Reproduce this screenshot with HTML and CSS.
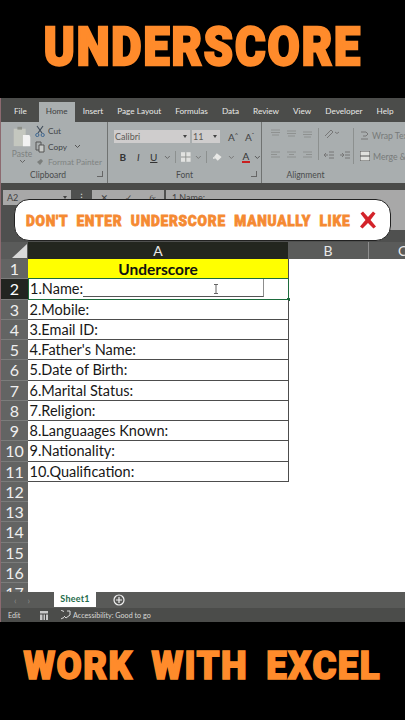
FILE: index.html
```html
<!DOCTYPE html>
<html lang="en">
<head>
<meta charset="utf-8">
<title>Underscore</title>
<link rel="stylesheet" href="styles.css">
</head>
<body>
<div class="page">
  <header class="banner banner-top"><h1 class="title">UNDERSCORE</h1></header>
  <main class="excel">
    <nav class="tabs">
      <span class="tab">File</span><span class="tab active">Home</span><span class="tab">Insert</span><span class="tab">Page Layout</span><span class="tab">Formulas</span><span class="tab">Data</span><span class="tab">Review</span><span class="tab">View</span><span class="tab">Developer</span><span class="tab">Help</span>
    </nav>
    <section class="ribbon">
      <div class="group g-clip">
        <div class="group-body clip-body">
          <div class="paste">
            <svg width="20" height="23" viewBox="0 0 20 25"><path d="M1 4h13v19H1z" fill="#c4c7bf"/><path d="M5 2h5v3H5z" fill="#8d9089"/><path d="M11 11h7l1 2v10h-8z" fill="#f2f2f2"/></svg>
            <span class="paste-label">Paste</span>
            <svg class="chev" width="7" height="5" viewBox="0 0 7 5"><path d="M1 1l2.500 2.500L6 1" fill="none" stroke="#666" stroke-width="1"/></svg>
          </div>
          <div class="clip-list">
            <div class="clip-row">
              <svg width="10" height="12" viewBox="0 0 10 12"><path d="M2 1l5 7M8 1L3 8" stroke="#3e4a58" stroke-width="1.100" fill="none"/><circle cx="2.300" cy="10" r="1.600" fill="none" stroke="#3f6791"/><circle cx="7.700" cy="10" r="1.600" fill="none" stroke="#3f6791"/></svg>
              <span>Cut</span>
            </div>
            <div class="clip-row">
              <svg width="10" height="12" viewBox="0 0 10 12"><path d="M1 1h5v8H1z" fill="none" stroke="#555" stroke-width="1"/><path d="M4 4h5v7H4z" fill="#c9cbc8" stroke="#555" stroke-width="1"/></svg>
              <span>Copy</span>
              <svg class="chev-copy" width="7" height="5" viewBox="0 0 7 5"><path d="M1 1l2.500 2.500L6 1" fill="none" stroke="#555" stroke-width="1"/></svg>
            </div>
            <div class="clip-row muted">
              <svg width="10" height="10" viewBox="0 0 10 10"><path d="M2 5l4-3 2 2-3 4z" fill="#7b7e7c"/></svg>
              <span>Format Painter</span>
            </div>
          </div>
        </div>
        <div class="group-label clip-label">Clipboard<span class="launcher"></span></div>
      </div>
      <div class="group g-font">
        <div class="group-body font-body">
          <div class="font-row">
            <span class="combo combo-font"><span>Calibri</span><i class="caret"></i></span>
            <span class="combo combo-size"><span>11</span><i class="caret"></i></span>
            <span class="grow">A<sup>^</sup></span><span class="grow">A<sup>ˇ</sup></span>
          </div>
          <div class="font-row style-row">
            <b class="style">B</b><i class="style">I</i><u class="style">U</u>
            <svg class="chev" width="7" height="5" viewBox="0 0 7 5"><path d="M1 1l2.500 2.500L6 1" fill="none" stroke="#666"/></svg>
            <span class="sep"></span>
            <svg width="10" height="10" viewBox="0 0 10 10"><path d="M0 0h10v10H0z" fill="#e2e3e1"/><path d="M5 0v10M0 5h10" stroke="#8f9290"/></svg>
            <svg class="chev" width="7" height="5" viewBox="0 0 7 5"><path d="M1 1l2.500 2.500L6 1" fill="none" stroke="#777"/></svg>
            <span class="sep"></span>
            <svg width="12" height="10" viewBox="0 0 12 10"><path d="M5 1l5 4-4 4-4-4z" fill="#e8e8e6"/><circle cx="2" cy="6" r="1" fill="#e8e8e6"/></svg>
            <svg class="chev" width="7" height="5" viewBox="0 0 7 5"><path d="M1 1l2.500 2.500L6 1" fill="none" stroke="#777"/></svg>
            <span class="color-a">A</span>
            <svg class="chev" width="7" height="5" viewBox="0 0 7 5"><path d="M1 1l2.500 2.500L6 1" fill="none" stroke="#555"/></svg>
          </div>
        </div>
        <div class="group-label">Font<span class="launcher"></span></div>
      </div>
      <div class="group g-align">
        <div class="group-body align-body">
          <div class="align-icons">
            <svg width="11" height="9" viewBox="0 0 11 9"><path d="M1 1h9M1 3.500h9M2 6h7" stroke="#8e9190"/></svg>
            <svg width="11" height="9" viewBox="0 0 11 9"><path d="M1 2h9M1 4.500h9M2 7h7" stroke="#8e9190"/></svg>
            <svg width="11" height="9" viewBox="0 0 11 9"><path d="M1 3h9M1 5.500h9M2 8h7" stroke="#8e9190"/></svg>
            <span class="sep"></span>
            <svg class="orient" width="16" height="10" viewBox="0 0 16 10"><path d="M1 8l6-6 2 2-6 6M11 4l2 1.500L15 4" stroke="#777" fill="none"/></svg>
            <svg width="11" height="9" viewBox="0 0 11 9"><path d="M1 1h9M1 3.500h6M1 6h9" stroke="#8e9190"/></svg>
            <svg width="11" height="9" viewBox="0 0 11 9"><path d="M1 1h9M3 3.500h5M1 6h9" stroke="#8e9190"/></svg>
            <svg width="11" height="9" viewBox="0 0 11 9"><path d="M1 1h9M4 3.500h6M1 6h9" stroke="#8e9190"/></svg>
            <svg width="11" height="9" viewBox="0 0 11 9"><path d="M5 1h5M5 4h5M5 7h5M4 4H0M2 2L0 4l2 2" stroke="#777" fill="none"/></svg>
            <svg width="11" height="9" viewBox="0 0 11 9"><path d="M5 1h5M5 4h5M5 7h5M0 4h4M2 2l2 2-2 2" stroke="#777" fill="none"/></svg>
          </div>
          <div class="wrap-col">
            <div class="wrap-row"><svg width="9" height="11" viewBox="0 0 9 11"><path d="M1 2h5l2 2-2 2H3M1 9h7" stroke="#777" fill="none"/></svg><span>Wrap Text</span></div>
            <div class="wrap-row"><svg width="10" height="10" viewBox="0 0 10 10"><path d="M0 0h10v10H0z" fill="#e0e1de" stroke="#555"/><path d="M0 5h10" stroke="#555"/></svg><span>Merge &amp; C</span></div>
          </div>
        </div>
        <div class="group-label align-label">Alignment</div>
      </div>
    </section>
    <div class="ribbon-gap"></div>
    <section class="formula">
      <span class="namebox">A2<i class="caret"></i></span>
      <span class="fx-dots">⋮</span>
      <span class="fx-btns"><span>✕</span><span>✓</span><span class="fx">fx</span></span>
      <span class="fx-input">1.Name:</span>
    </section>
    <section class="sheet">
      <div class="col-head">
        <div class="corner"><span class="tri"></span></div>
        <div class="col col-a">A</div>
        <div class="col col-b">B</div>
        <div class="col col-c">C</div>
      </div>
      <div class="grid">
        <div class="rh">1</div><div class="cell head-cell">Underscore</div>
        <div class="rh rh-active">2</div>
        <div class="cell cell-sel">1.Name:
          <span class="input-line"></span>
          <svg class="ibeam" width="6" height="10" viewBox="0 0 6 10"><path d="M1 .5h4M1 9.500h4M3 .5v9" stroke="#666" fill="none"/></svg>
          <span class="handle"></span>
        </div>
        <div class="rh">3</div><div class="cell">2.Mobile:</div>
        <div class="rh">4</div><div class="cell">3.Email ID:</div>
        <div class="rh">5</div><div class="cell">4.Father's Name:</div>
        <div class="rh">6</div><div class="cell">5.Date of Birth:</div>
        <div class="rh">7</div><div class="cell">6.Marital Status:</div>
        <div class="rh">8</div><div class="cell">7.Religion:</div>
        <div class="rh">9</div><div class="cell">8.Languaages Known:</div>
        <div class="rh">10</div><div class="cell">9.Nationality:</div>
        <div class="rh">11</div><div class="cell">10.Qualification:</div>
        <div class="rh">12</div><div class="blank"></div>
        <div class="rh">13</div><div class="blank"></div>
        <div class="rh">14</div><div class="blank"></div>
        <div class="rh">15</div><div class="blank"></div>
        <div class="rh">16</div><div class="blank"></div>
        <div class="rh">17</div><div class="blank"></div>
      </div>
    </section>
    <div class="sheet-tabs">
      <span class="nav-arrows"><span>‹</span><span>›</span></span>
      <span class="sheet-tab">Sheet1</span>
      <svg class="add" width="12" height="12" viewBox="0 0 12 12"><circle cx="6" cy="6" r="5" fill="none" stroke="#f2f2f2" stroke-width="1.200"/><path d="M6 3v6M3 6h6" stroke="#f2f2f2" stroke-width="1.200"/></svg>
    </div>
    <div class="status">
      <span class="edit">Edit</span>
      <svg class="macro" width="8" height="9" viewBox="0 0 8 9"><path d="M0 0h8v9H0z" fill="#c9c9c9"/><path d="M0 3h8M3 3v6M5.500 3v6" stroke="#444"/></svg>
      <svg class="acc" width="11" height="10" viewBox="0 0 11 10"><path d="M3 1.500a4 4 0 1 0 0 6M6 1h3v4M3 6l2 2 4-3" fill="none" stroke="#ddd" stroke-width="1"/></svg>
      <span>Accessibility: Good to go</span>
    </div>
    <div class="callout">
      <span class="callout-text">DON'T ENTER UNDERSCORE MANUALLY LIKE</span>
      <svg class="cross" width="20" height="20" viewBox="0 0 20 20"><path d="M2.500 3.500L5 1.500l5 5.500 5-5.500 2.500 2L12.500 10l5.500 6.500-2.500 2L10 13l-5.500 5.500-2.500-2L7.500 10z" fill="#d3232a"/></svg>
    </div>
  </main>
  <footer class="banner banner-bottom"><p class="subtitle">WORK WITH EXCEL</p></footer>
</div>
</body>
</html>
```
FILE: styles.css
```css
* { box-sizing: border-box; }
html, body { margin: 0; padding: 0; }
body { background: #000; font-family: "Lato", "Liberation Sans", sans-serif; overflow: hidden; }
.page { width: 405px; height: 720px; display: flex; flex-direction: column; }

.banner { background: #000; display: flex; justify-content: center; flex: none; }
.banner-top { height: 98px; padding-top: 16px; }
.banner-bottom { height: 98px; padding-top: 22px; }
.title, .subtitle {
  margin: 0; color: #ff8b2b; font-family: "Roboto", sans-serif; font-weight: 900;
  white-space: nowrap;
}
.title { font-size: 53px; line-height: 62px; letter-spacing: 2.200px; transform: scaleX(.88); -webkit-text-stroke: 2.500px #ff8b2b; }
.subtitle { font-size: 38px; line-height: 44px; letter-spacing: 1.500px; word-spacing: 8px; transform: scaleX(.96); -webkit-text-stroke: 1.600px #ff8b2b; }

.excel { position: relative; flex: 1; min-height: 0; display: flex; flex-direction: column; background: #fff; border-left: 1px solid #8c6a70; overflow: hidden; }

.tabs { height: 24px; flex: none; background: #4b4c4a; display: flex; align-items: flex-end; padding-left: 6px; color: #e9e9e7; font-size: 8.200px; white-space: nowrap; }
.tab { height: 20px; line-height: 19px; padding: 0 7px; }
.tab:first-child { margin-right: 5px; }
.active { background: #a9aeaf; color: #3e4040; padding: 0 7px; margin-right: 1px; }

.ribbon { height: 61px; flex: none; background: #a9aeaf; display: flex; color: #444; font-size: 9px; }
.group { display: flex; flex-direction: column; border-right: 1px solid #707372; flex: none; }
.g-clip { width: 107px; }
.g-font { width: 154px; }
.g-align { flex: 1; border-right: 0; min-width: 0; overflow: hidden; }
.group-body { flex: 1; display: flex; min-height: 0; }
.group-label { height: 15px; line-height: 14px; text-align: center; position: relative; color: #4a4c4c; font-size: 8.500px; }
.clip-label { padding-right: 12px; }
.launcher { position: absolute; right: 4px; top: 3px; width: 6px; height: 6px; border: 1px solid #666; border-width: 0 1px 1px 0; }

.clip-body { padding: 3px 0 0 10px; gap: 2px; }
.paste { display: flex; flex-direction: column; align-items: center; width: 22px; color: #7d8180; font-size: 8.500px; }
.paste-label { margin-top: 1px; line-height: 10px; }
.clip-list { display: flex; flex-direction: column; gap: 2.500px; font-size: 8.300px; color: #404345; white-space: nowrap; }
.clip-row { display: flex; align-items: center; gap: 3px; height: 13px; }
.muted { color: #7f8382; }
.chev-copy { margin-left: 4px; }

.font-body { flex-direction: column; padding: 8px 0 0 6px; gap: 8px; }
.font-row { display: flex; align-items: center; }
.combo { height: 13px; background: #cfcdcd; display: flex; align-items: center; justify-content: space-between; padding: 0 3px 0 1px; color: #5d5a55; font-size: 9px; }
.combo-font { width: 76px; }
.combo-size { width: 28px; margin-left: 2px; }
.caret { width: 0; height: 0; border: 2px solid transparent; border-top: 3px solid #444; border-bottom: 0; display: block; }
.grow { font-size: 10px; margin-left: 8px; color: #3e4040; width: 9px; }
.grow sup { font-size: 6px; line-height: 0; }
.style-row { gap: 4px; padding-left: 3px; font-size: 10px; color: #333; }
.style-row .style { width: 12px; text-align: center; font-family: "Lato", sans-serif; }
.sep { width: 1px; height: 12px; background: #8c908f; margin: 0 1px; }
.color-a { font-size: 10px; color: #333; border-bottom: 2px solid #c91f1f; line-height: 10px; width: 9px; text-align: center; margin-left: 3px; }

.align-body { padding: 6px 0 0 8px; gap: 4px; }
.align-icons { display: grid; grid-template-columns: 11px 11px 11px 1px 11px 11px; gap: 12px 5px; width: 79px; align-items: center; align-content: start; }
.align-icons .sep { grid-row: 1 / 3; grid-column: 4; height: 32px; margin: 0; }
.orient { grid-column: 5 / 7; grid-row: 1; }
.wrap-col { display: flex; flex-direction: column; gap: 7px; color: #777a79; font-size: 8.700px; white-space: nowrap; border-left: 1px solid #8c908f; padding-left: 6px; height: 36px; }
.wrap-row { display: flex; align-items: center; gap: 3px; height: 14px; }
.align-label { padding-right: 56px; }

.ribbon-gap { height: 7px; flex: none; background: #4a4b49; }
.formula { height: 52px; flex: none; background: #4f504f; display: flex; align-items: flex-start; padding: 0 0 0 2px; color: #3f3f3f; font-size: 9px; }
.namebox { width: 68px; height: 15px; background: #a8a8a8; display: flex; align-items: center; justify-content: space-between; padding: 0 4px; }
.fx-dots { width: 21px; text-align: center; color: #e0e0e0; line-height: 15px; font-family: "DejaVu Sans", sans-serif; }
.fx-btns { width: 72px; height: 15px; background: #a8a8a8; display: flex; justify-content: space-around; align-items: center; font-family: "DejaVu Sans", sans-serif; }
.fx { font-style: italic; font-family: "Liberation Serif", serif; }
.fx-input { flex: 1; height: 40px; background: #a8a8a8; margin-left: 2px; padding: 2px 6px; }

.sheet { flex: 1; min-height: 0; display: flex; flex-direction: column; background: #fff; overflow: hidden; }
.col-head { height: 17px; flex: none; display: grid; grid-template-columns: 27px 260px 81px 1fr; font-size: 14px; color: #e8e8e8; text-align: center; line-height: 17px; background: #5a5b5a; }
.corner { background: #5a5b5a; position: relative; }
.tri { position: absolute; right: 1px; bottom: 1px; width: 0; height: 0; border-style: solid; border-width: 0 0 14px 15px; border-color: transparent transparent #d9d9d9 transparent; }
.col-a { background: #23261f; }
.col-b { border-right: 1px solid #8e8e8e; }
.col-c { text-align: left; padding-left: 29px; }

.grid { display: grid; grid-template-columns: 27px 261px; grid-auto-rows: 20.250px; }
.rh { background: #636463; color: #efefef; text-align: center; font-size: 16px; line-height: 20px; border-bottom: 1px solid #7b7c7b; }
.rh-active { background: #222420; color: #fff; }
.cell { background: #fff; color: #171717; font-size: 14.500px; line-height: 20px; padding-left: 1.500px; border-right: 1px solid #4d4d4d; border-bottom: 1px solid #4d4d4d; white-space: nowrap; position: relative; }
.head-cell { background: #ffff00; text-align: center; font-weight: 700; font-size: 15.500px; border-bottom-color: #1d6b3d; padding: 0; color: #111; }
.cell-sel { border: 1px solid #1d6b3d; border-top: 0; padding-left: 1px; }
.input-line { position: absolute; left: 54px; right: 24px; top: 0; bottom: 2px; border-right: 1px solid #8d8d8d; border-bottom: 1px solid #555; }
.ibeam { position: absolute; left: 184px; top: 5px; }
.handle { position: absolute; right: -2px; bottom: -2px; width: 3px; height: 3px; background: #1d6b3d; }
.blank { background: #fff; }

.sheet-tabs { height: 16px; flex: none; background: #595a58; display: flex; align-items: center; color: #8b8c8a; font-size: 9px; }
.nav-arrows { width: 53px; display: flex; gap: 11px; padding-left: 13px; }
.sheet-tab { width: 42px; height: 15px; background: #fff; color: #1e6b4a; font-weight: 700; font-size: 9px; text-align: center; line-height: 13px; align-self: flex-start; letter-spacing: .2px; }
.add { margin-left: 17px; }
.status { height: 14px; flex: none; background: #4b4c4a; display: flex; align-items: center; color: #d9d9d7; font-size: 7.200px; padding-left: 7px; white-space: nowrap; }
.edit { width: 32px; }
.macro { margin-right: 13px; }
.acc { margin-right: 1px; }

.callout {
  position: absolute; left: 13px; top: 101px; width: 377px; height: 42px; background: #fff;
  border: 1px solid #222; border-radius: 15px; display: flex; align-items: center; padding: 2px 0 0 11px;
}
.callout-text { color: #f58a32; font-family: "Roboto", sans-serif; font-weight: 900; font-size: 15.500px; -webkit-text-stroke: .8px #f58a32; letter-spacing: .85px; word-spacing: 5px; white-space: nowrap; transform: scaleX(.88); transform-origin: left center; width: 324px; flex: none; }
.cross { margin: -2px 0 0 8px; }
```
